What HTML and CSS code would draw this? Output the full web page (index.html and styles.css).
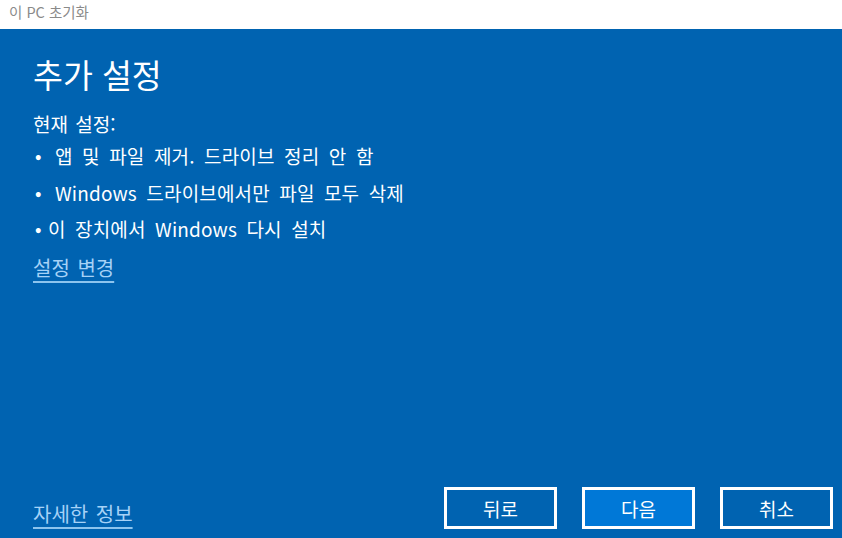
FILE: index.html
```html
<!DOCTYPE html>
<html lang="ko">
<head>
<meta charset="utf-8">
<link rel="stylesheet" href="styles.css">
</head>
<body>
<div class="window">
  <div class="titlebar">이 PC 초기화</div>
  <div class="content">
    <h1 class="heading">추가 설정</h1>
    <div class="label">현재 설정:</div>
    <ul class="list">
      <li class="item"><span class="dot">•</span><span class="gap"></span>앱 및 파일 제거. 드라이브 정리 안 함</li>
      <li class="item"><span class="dot">•</span><span class="gap"></span>Windows 드라이브에서만 파일 모두 삭제</li>
      <li class="item"><span class="dot">•</span><span class="gap-small"></span>이 장치에서 Windows 다시 설치</li>
    </ul>
    <a class="link change">설정 변경</a>
    <div class="footer">
      <a class="link more">자세한 정보</a>
      <div class="buttons">
        <button class="btn">뒤로</button>
        <button class="btn primary">다음</button>
        <button class="btn">취소</button>
      </div>
    </div>
  </div>
</div>
</body>
</html>
```
FILE: styles.css
```css
html, body {
  margin: 0;
  padding: 0;
  width: 842px;
  height: 538px;
  overflow: hidden;
}
body {
  font-family: "Noto Sans CJK KR", "Noto Sans", sans-serif;
  color: #fff;
}
.window {
  display: flex;
  flex-direction: column;
  height: 538px;
}
.titlebar {
  height: 29px;
  background: #fff;
  color: #8a8a8a;
  font-size: 14.5px;
  line-height: 23px;
  padding-left: 9px;
}
.content {
  flex: 1;
  background: #0063b1;
  display: flex;
  flex-direction: column;
  padding: 0 9px 9px 33px;
}
.heading {
  margin: 24px 0 0 0;
  font-size: 32.5px;
  font-weight: normal;
  line-height: 42px;
}
.label {
  margin-top: 15px;
  font-size: 19px;
  line-height: 28px;
  word-spacing: 2px;
}
.list {
  list-style: none;
  margin: 0;
  padding: 0;
}
.item {
  font-size: 19px;
  line-height: 36.5px;
  word-spacing: 4px;
  letter-spacing: 0.15px;
  display: flex;
  align-items: center;
  white-space: pre;
}
.dot {
  width: 10px;
  padding-left: 2px;
  font-size: 17px;
  font-weight: bold;
}
.gap { width: 10px; }
.gap-small { width: 3px; }
.link {
  color: #a6d2f7;
  font-size: 20px;
  text-decoration: underline;
  text-decoration-color: #8cc4ee;
  text-underline-offset: 5px;
  word-spacing: 2px;
  align-self: flex-start;
}
.change {
  margin-top: 4px;
  line-height: 32px;
}
.footer {
  margin-top: auto;
  display: flex;
  align-items: center;
  justify-content: space-between;
}
.more {
  margin-top: 12px;
}
.buttons {
  display: flex;
  gap: 25px;
}
.btn {
  width: 113px;
  height: 42px;
  box-sizing: border-box;
  border: 3px solid #fff;
  background: #0063b1;
  color: #fff;
  font-family: "Noto Sans CJK KR", sans-serif;
  font-size: 19px;
  padding: 0;
}
.btn.primary {
  background: #0078d7;
}
```
